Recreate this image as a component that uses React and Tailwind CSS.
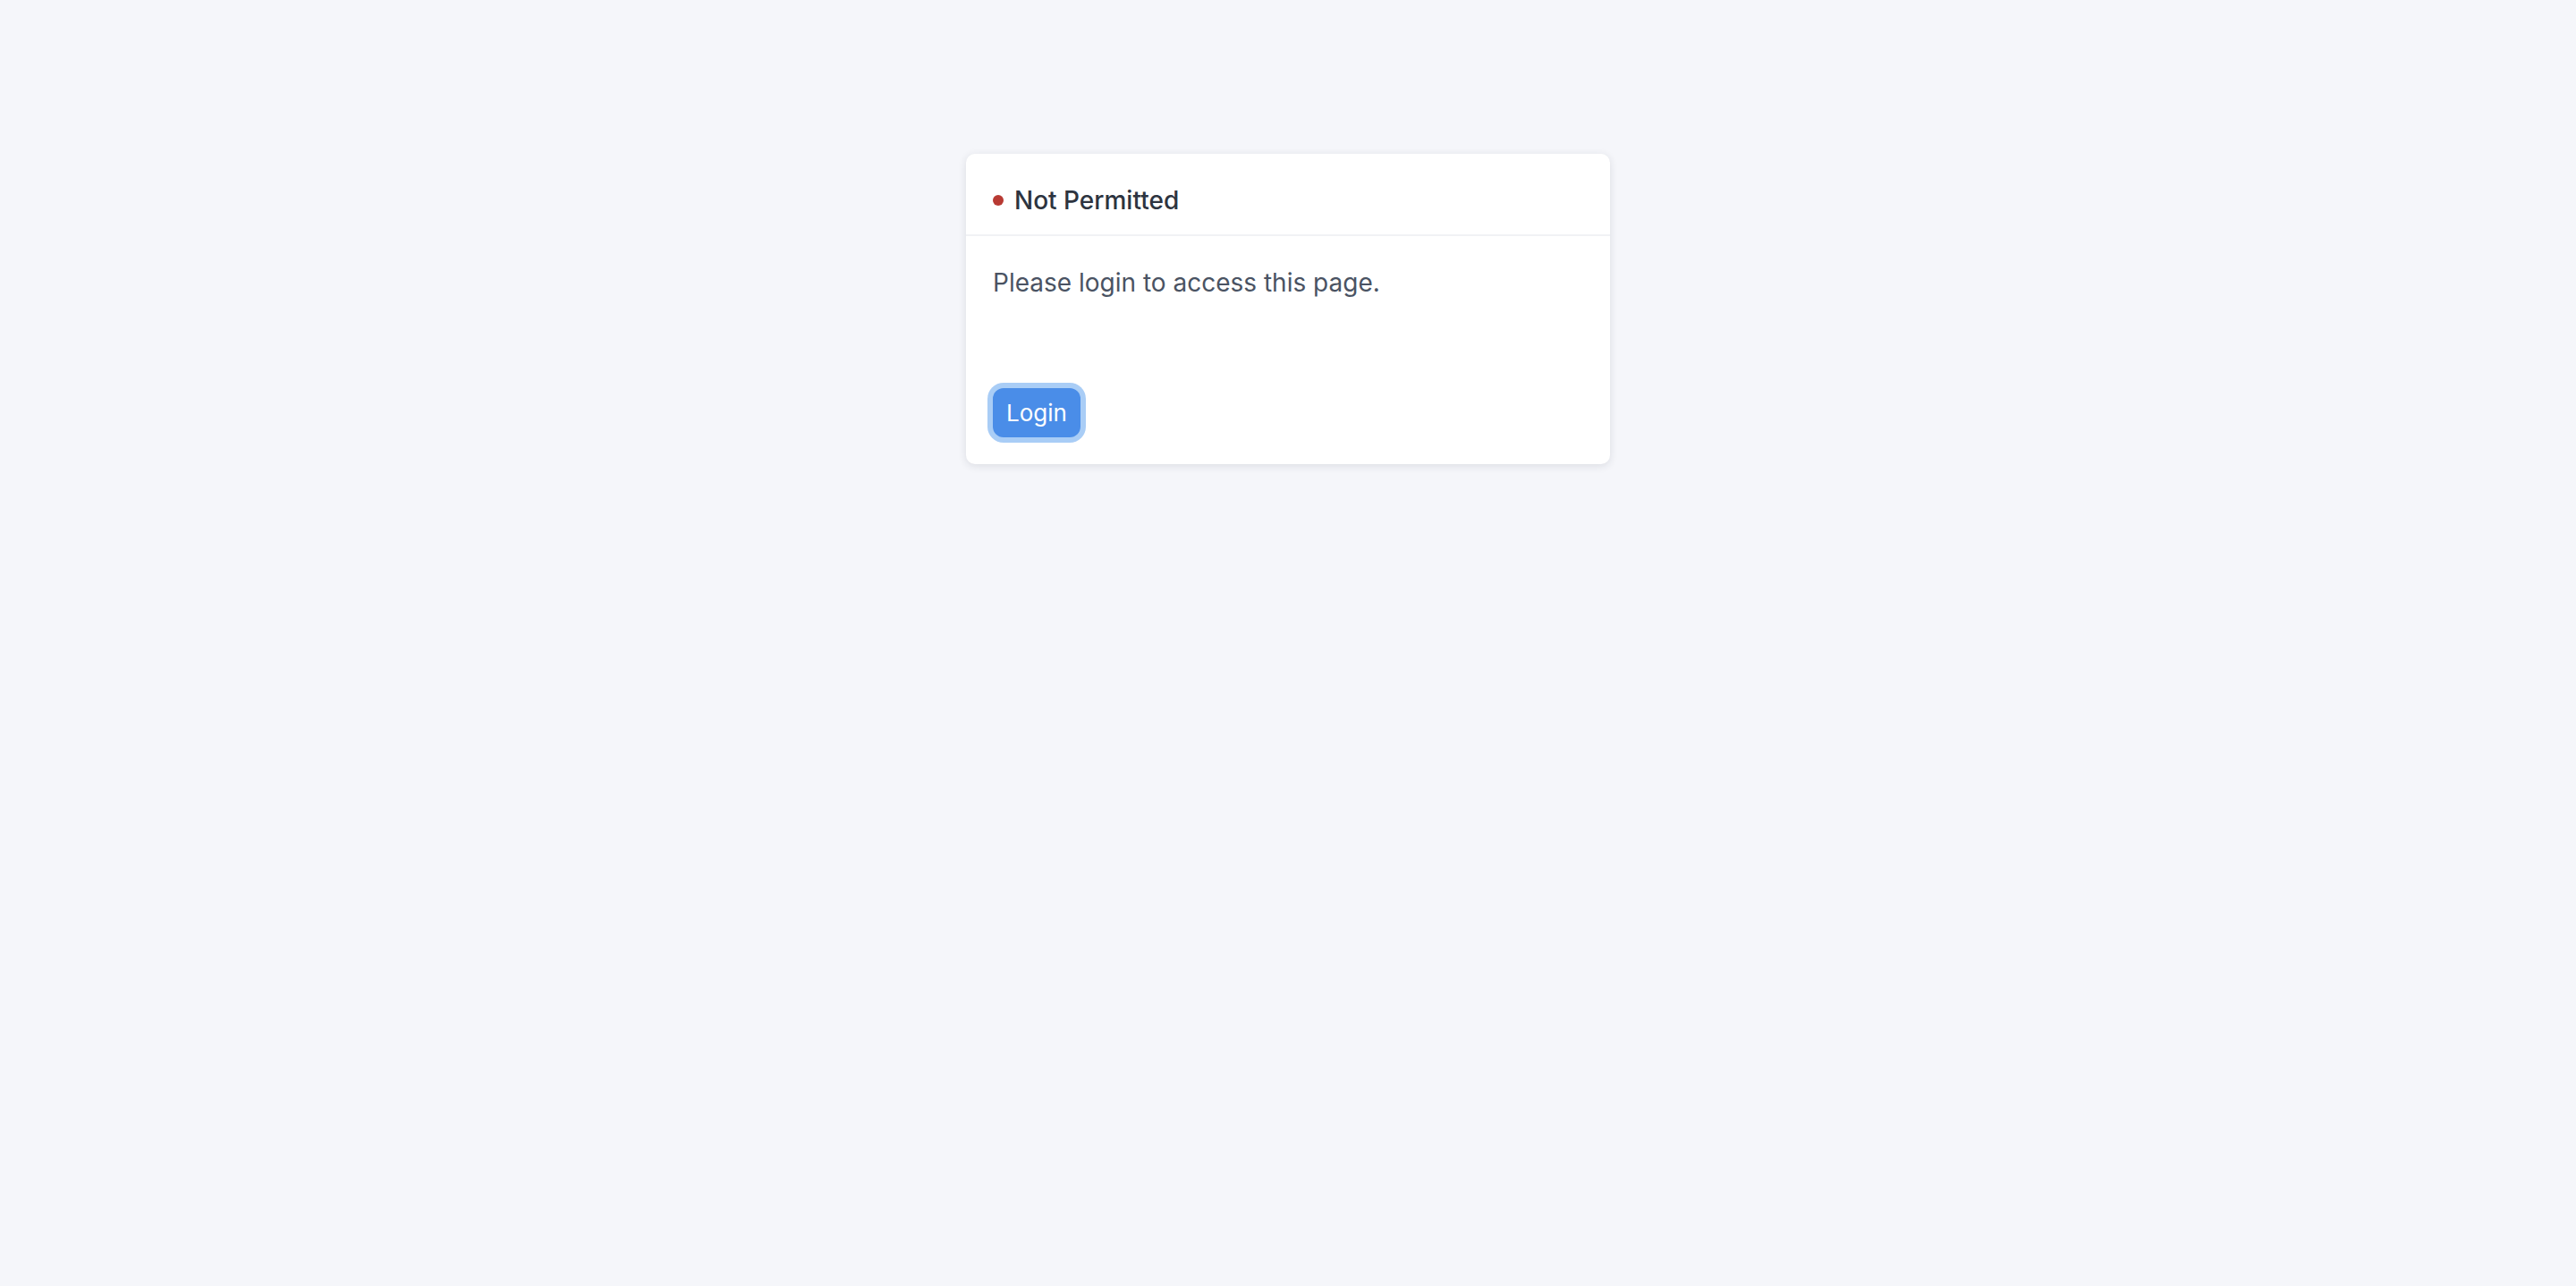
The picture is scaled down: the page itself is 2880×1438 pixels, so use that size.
import React from "react";

function NotPermitted() {
  return (
    <div className="mx-auto w-[720px] rounded-[10px] bg-white shadow-[0_2px_10px_rgba(30,40,60,0.12)]">
      <div className="flex items-center gap-[12px] border-b-2 border-[#f1f2f5] px-[30px] pb-[18px] pt-[32px]">
        <span className="h-[12px] w-[12px] rounded-full bg-[#b83a33]"></span>
        <h1 className="text-[28px] font-medium leading-[40px] text-[#2d3440]">Not Permitted</h1>
      </div>
      <div className="px-[30px] pb-[30px] pt-[30px]">
        <p className="text-[28px] leading-[44px] text-[#4a5363]">Please login to access this page.</p>
        <button className="mt-[96px] h-[55px] rounded-[12px] bg-[#4a8de8] px-[15px] text-[26px] text-white ring-[6px] ring-[#a9cdf6]">
          Login
        </button>
      </div>
    </div>
  );
}

export default function App() {
  return (
    <div className="min-h-screen bg-[#f5f6fa] pt-[172px] font-['Inter',sans-serif]">
      <NotPermitted />
    </div>
  );
}
